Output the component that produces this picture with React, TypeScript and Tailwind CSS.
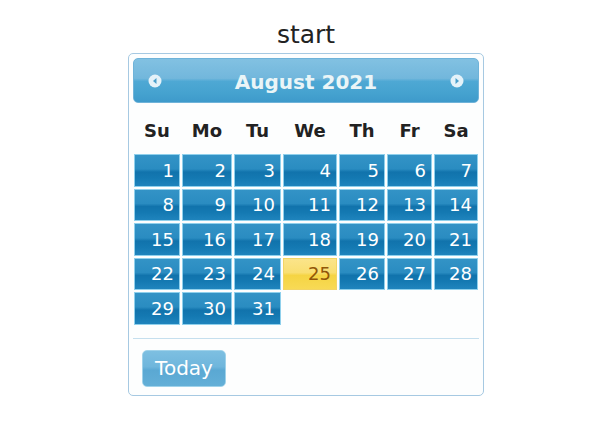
import React from 'react';

const days = ['Su', 'Mo', 'Tu', 'We', 'Th', 'Fr', 'Sa'];

// August 2021 starts on a Sunday
const weeks: (number | null)[][] = [
  [1, 2, 3, 4, 5, 6, 7],
  [8, 9, 10, 11, 12, 13, 14],
  [15, 16, 17, 18, 19, 20, 21],
  [22, 23, 24, 25, 26, 27, 28],
  [29, 30, 31, null, null, null, null],
];

function NavIcon({ dir }: { dir: 'prev' | 'next' }) {
  return (
    <svg width="14" height="14" viewBox="0 0 14 14">
      <circle cx="7" cy="7" r="6.5" fill="#e4f2f9" />
      {dir === 'prev' ? (
        <polygon points="8.5,4 5,7 8.5,10" fill="#4a9fcb" />
      ) : (
        <polygon points="5.5,4 9,7 5.5,10" fill="#4a9fcb" />
      )}
    </svg>
  );
}

export default function App() {
  return (
    <div className="w-[612px] h-[427px] bg-white flex flex-col items-center" style={{ fontFamily: '"DejaVu Sans", Verdana, sans-serif' }}>
      <div className="mt-[20px] h-[30px] text-[25px] leading-[30px] text-[#222]">start</div>

      <div className="mt-[3px] w-[356px] border border-[#a6c9e2] rounded-[5px] bg-[#fdfefe] px-[4px] pt-[4px] pb-[8px]">
        {/* Header */}
        <div className="h-[45px] rounded-[5px] border border-[#6fb3d9] bg-[linear-gradient(to_bottom,#82c1e2_0%,#72b7dc_45%,#4ea8d4_52%,#45a2cf_80%,#3e9acb_100%)] flex items-center justify-between px-[14px]">
          <NavIcon dir="prev" />
          <span className="pt-[3px] text-[20px] font-bold text-[#eaf5f7]">August 2021</span>
          <NavIcon dir="next" />
        </div>

        {/* Day names */}
        <div className="h-[51px] pt-[4px] px-[1px] grid grid-cols-[46px_50px_47px_54px_46px_45px_44px] gap-x-[2px] items-center">
          {days.map((d) => (
            <div key={d} className="text-center text-[18px] font-bold text-[#222]">{d}</div>
          ))}
        </div>

        {/* Days */}
        <div className="px-[1px] grid grid-cols-[46px_50px_47px_54px_46px_45px_44px] gap-x-[2px] gap-y-[2px]">
          {weeks.flat().map((n, i) =>
            n === null ? (
              <div key={i} className="h-[32.5px]" />
            ) : n === 25 ? (
              <div
                key={i}
                className="h-[32.5px] border border-[#f3d565] bg-[linear-gradient(to_bottom,#fbe48a_0%,#f9df72_45%,#f5d443_55%,#f8da55_100%)] text-[#915608] text-[18px] flex items-center justify-end pr-[5px]"
              >
                {n}
              </div>
            ) : (
              <div
                key={i}
                className="h-[32.5px] border border-[#8fd0ec] bg-[linear-gradient(to_bottom,#3393c6_0%,#2a8cc1_45%,#1173ac_55%,#1479b2_75%,#1f84bd_100%)] text-white text-[18px] flex items-center justify-end pr-[5px]"
              >
                {n}
              </div>
            )
          )}
        </div>

        {/* Footer */}
        <div className="mt-[13px] border-t border-[#c5dfee] pt-[11px] pl-[9px]">
          <button className="w-[84px] h-[37px] rounded-[5px] border border-[#9fd2ea] bg-[linear-gradient(to_bottom,#7dbfe1_0%,#6fb6dc_45%,#5aa8d3_55%,#63afd7_100%)] text-white text-[20px] flex items-center justify-center">
            Today
          </button>
        </div>
      </div>
    </div>
  );
}
